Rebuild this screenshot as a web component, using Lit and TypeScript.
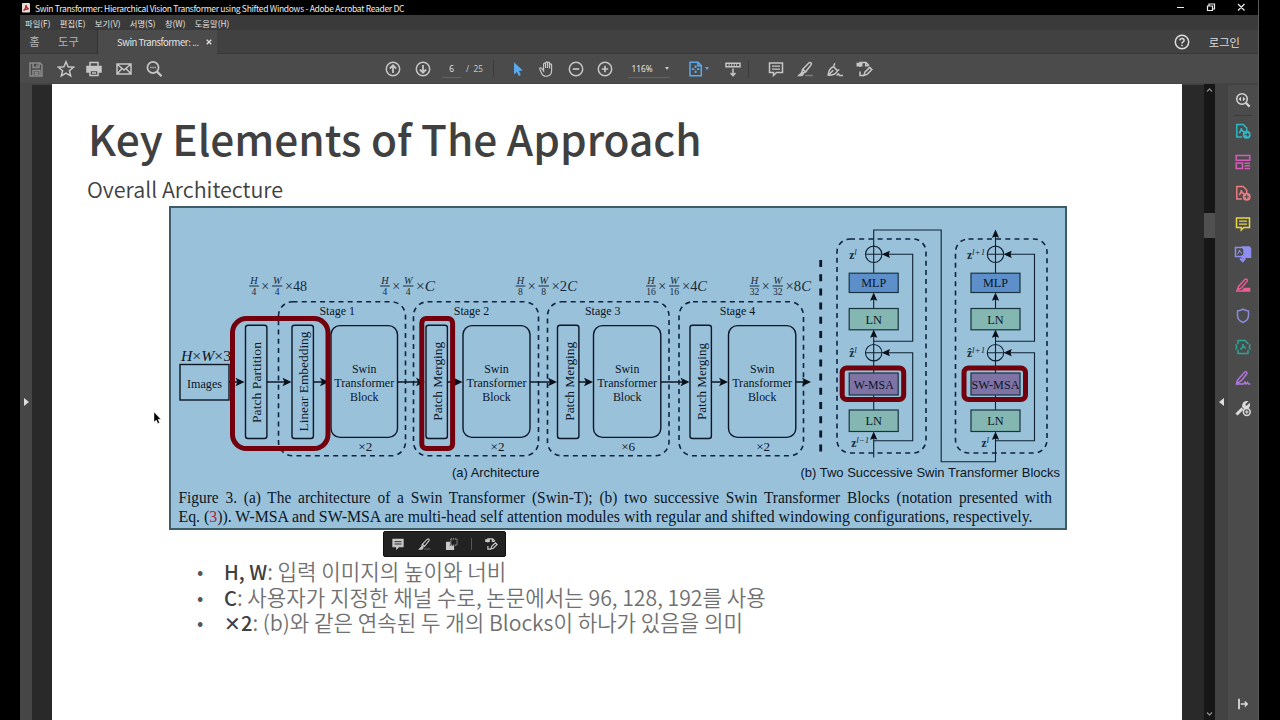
import { LitElement, html, svg, css } from "lit";
import { customElement } from "lit/decorators.js";

/* ---------- icons, all on an 18 x 18 grid centred on 9,9 ---------- */
const ICONS: Record<string, unknown> = {
  save: svg`<path d="M3 3h10l2 2v11H3zM6 3v4.500h6V3M6 16v-5.500h7V16M10 4.500v2M7.500 12.500h4M7.500 14.300h4"/>`,
  star: svg`<path d="M9 1.800l2.100 5 5.400.4-4.100 3.500 1.300 5.300L9 13.100 4.300 16l1.300-5.300L1.500 7.200l5.400-.4z"/>`,
  print: svg`<path d="M5 6V2.500h8V6"/><path d="M2 6.500h14v5.500H2z" fill="currentColor"/><path d="M5 10.500h8v5H5z" fill="#4b4b4b"/><path d="M7 13h4"/>`,
  mail: svg`<path d="M2 4h14v10H2zM2 4l7 6 7-6M2 14l5-5.500M16 14l-5-5.500"/>`,
  zoomout: svg`<circle cx="8" cy="7.500" r="5.600" stroke-width="1.700"/><path d="M12 11.600l4.600 4.600" stroke-width="2.300"/><path d="M5.200 7.500h1.300M7.400 7.500h1.300M9.600 7.500h1.300" stroke-width="1.500"/>`,
  up: svg`<circle cx="9" cy="9" r="6.700"/><path d="M9 13V5.500M5.900 8.500L9 5.300l3.100 3.200" stroke-width="1.800"/>`,
  down: svg`<circle cx="9" cy="9" r="6.700"/><path d="M9 5v7.500M5.900 9.500L9 12.700l3.100-3.200" stroke-width="1.800"/>`,
  pointer: svg`<path d="M5 2.300v12.200l2.900-2.600 1.900 4 2-1-1.900-3.900 3.900-.5z" fill="currentColor" stroke="none"/>`,
  hand: svg`<path d="M5.600 10V4.300c0-1.500 2-1.500 2 0V8V3c0-1.500 2-1.500 2 0V8V3.300c0-1.500 2-1.500 2 0V8.500V5c0-1.400 2-1.400 2 0v5.500c0 7-8.200 7-9.900 3L1.800 9.300c-.5-1.500 1-2 1.900-1l1.900 2.600z" stroke-width="1.200"/>`,
  minus: svg`<circle cx="9" cy="9" r="6.700"/><path d="M5.800 9h6.400" stroke-width="1.700"/>`,
  plus: svg`<circle cx="9" cy="9" r="6.700"/><path d="M5.800 9h6.400M9 5.800v6.400" stroke-width="1.700"/>`,
  fit: svg`<path d="M3 2.200h8l3.300 3.300v10.300H3zM10.800 2.500v3.300h3.300"/><path d="M8.600 5.500v2.500M8.600 10.500V13M4.800 9.200h2.500M10 9.200h2.500" stroke-width="1.800"/>`,
  scroll: svg`<path d="M2 3.200h14v3.600H2z" /><path d="M4.500 5h1.200M7 5h1.200M9.600 5h1.200M12 5h1.200M9 8.500v7M6.500 13L9 15.600l2.500-2.600"/>`,
  comment: svg`<path d="M2.500 3h13v9.500H9.500L6.500 15.500v-3h-4z"/><path d="M5 6.200h8M5 9.200h8" stroke-width="1.300"/>`,
  marker: svg`<path d="M5.500 9.500L12 2.800c1.500-1 3 .4 2.200 1.900L8.500 12l-3.700 1.200zM6 9.500l2.300 2.300"/><path d="M1.800 15.500l3-3 1.500 1.500-1.500 1.500z" fill="currentColor"/><path d="M8 15.500h8" opacity=".4"/>`,
  pen: svg`<path d="M2.200 15.300C2.500 10.500 4 8 7.500 6.700l4 4C10.500 13.500 7.500 15.300 2.200 15.300zM7.500 6.700l1.300-3.500M11.500 10.700l1.800-1.200M2.500 15l4.700-4.700"/><path d="M10.500 15.500l2-1.700 1 1.700H17"/>`,
  edit: svg`<path d="M5 7V2.500h6l3 3M10.700 2.800v3h3M5 11.500v4h4"/><path d="M1.500 3.700h6M1.500 5.500h6" stroke-width="1.800"/><path d="M9 15.300l.9-3.200 4.800-4.700 2.200 2.200-4.800 4.800z"/>`,
  help: svg`<circle cx="9" cy="9" r="6.700"/><path d="M6.900 7.400c.1-2.600 4.200-2.500 4.200 0 0 1.500-2.100 1.500-2.100 3M9 11.800v1.500"/>`,
  search: svg`<circle cx="8" cy="8" r="5.300" stroke-width="1.500"/><path d="M12 12l3.600 3.600" stroke-width="2.200"/><path d="M4.500 8l2.600-2.200v4.400zM11.500 8L8.900 5.800v4.400z" fill="currentColor" stroke="none"/>`,
  exportpdf: svg`<path d="M8 15H2.800V2.500h6.400l3.500 3.500v3M5 11c2.500-2 2.500-3 2.300-5 0 2 1 3.500 3 3.700"/><circle cx="12.700" cy="12.800" r="4" fill="currentColor" stroke="none"/><path d="M10.500 12.800h4M13 11.200l1.700 1.600-1.700 1.600" stroke="#4b4b4b" stroke-width="1.100"/>`,
  organize: svg`<path d="M2.200 2.500h13.600v4.700H2.200zM2.200 10h6.300v5.500H2.200zM10.500 10.200h5.500M10.500 12.800h5.500M10.500 15.400h5.500"/>`,
  createpdf: svg`<path d="M8 15H2.800V2.500h6.400l3.500 3.500v3M5 11c2.500-2 2.500-3 2.300-5 0 2 1 3.500 3 3.700"/><circle cx="12.700" cy="12.800" r="4" fill="currentColor" stroke="none"/><path d="M10.500 12.800h4.400M12.700 10.600V15" stroke="#4b4b4b" stroke-width="1.100"/>`,
  note: svg`<path d="M2.500 3h13v9.500H9.800L7.300 15v-2.500H2.500z"/><path d="M5 6.200h8M5 9.200h8" stroke-width="1.300"/>`,
  combine: svg`<path d="M8.500 2h6.700l1.300 1.500v8.800h-8z" fill="currentColor"/><path d="M1.500 2.500h7l1.500 1.500v7.500H1.500z" fill="#4b4b4b"/><path d="M3.500 9c2-1.500 2-2.500 1.900-4 .2 2 1 2.700 2.600 3.200" stroke-width="1.100"/><path d="M8.700 10v6M6 13.300l2.700 3 2.700-3" stroke-width="1.900"/>`,
  redact: svg`<path d="M4.500 10.500L11 3.300c1.300-.9 2.800.3 2.100 1.800L7.500 12l-4 1.600z"/><path d="M2 15h13.500v-2.500h-5L8 15" fill="currentColor"/>`,
  shield: svg`<path d="M9 2.200c1.700 1.300 3.400 1.600 5.500 1.700v4.600c0 3.400-2.200 5.600-5.500 7-3.300-1.400-5.500-3.600-5.500-7V3.900C5.600 3.800 7.300 3.500 9 2.200z"/>`,
  compress: svg`<path d="M4 6.200V2.500h7l3 3v.7M4 11.800v3.700h10v-3.700M1.500 6.500C3 7 3 11 1.500 11.500M16.500 6.500C15 7 15 11 16.500 11.500M6.300 11.500c2.500-1.500 3-3 2.700-5.500 0 2.500 1 3.800 3 4.200"/>`,
  sign: svg`<path d="M4.500 10L10.700 3c1.300-.9 2.800.3 2.100 1.800L7.300 11.700 2.500 15c.1-2 .7-3.700 2-5z"/><path d="M2.500 15h7l1.500-2 1 2 1.500-1.500 1 1.500h1.800"/>`,
  wrench: svg`<path d="M2.500 15.500l6-6" stroke-width="3"/><path d="M12.800 2.700L10.500 5l.5 2 2 .5 2.200-2.300c.6 2.600-1.600 4.800-4.400 4.200C7.700 8.500 8.500 2.700 12.800 2.700z" fill="currentColor"/><circle cx="12.800" cy="13" r="3.400" fill="#4b4b4b"/><path d="M11 13h3.600M12.800 11.200v3.600" stroke-width="1.200"/>`,
  collapse: svg`<path d="M4.500 3v12" stroke-width="2"/><path d="M6.500 9h7M11 6.200L13.800 9 11 11.800" stroke-width="1.600"/>`,
  notefill: svg`<path d="M2.500 3h13v9.500H9.800L7.300 15v-2.500H2.500z" fill="currentColor"/><path d="M4.500 6h9M4.500 9h9" stroke="#222" stroke-width="1.200"/>`,
  copy: svg`<path d="M2 7h4v5h5v4H2z" fill="currentColor"/><path d="M7.500 2.500h8v8h-8z" stroke-dasharray="1.500 1" stroke-width="1.200"/>`,
};

const icon = (name: string, size = 18) =>
  html`<svg class="ic" width=${size} height=${size} viewBox="0 0 18 18" fill="none" stroke="currentColor" stroke-width="1.500">${ICONS[name]}</svg>`;

/* ---------- the figure ---------- */
const t = (x: number, y: number, s: string, w: number, size = 11.8, anchor = "middle", extra = "") =>
  svg`<text x=${x} y=${y} font-size=${size} text-anchor=${anchor} textLength=${w} lengthAdjust="spacingAndGlyphs" class=${extra}>${s}</text>`;

const arrow = (x1: number, x2: number) => svg`
  <path class="ln" d="M${x1} 382H${x2 - 5}"/>
  <path class="head" d="M${x2} 382l-9-4.300 2 4.300-2 4.300z"/>`;

const upHead = (x: number, y: number) => svg`<path class="head" d="M${x} ${y}l-3.600 8.200 3.600-1.200 3.600 1.200z"/>`;
const leftHead = (x: number, y: number) => svg`<path class="head" d="M${x} ${y}l8.200-3.600-1.200 3.600 1.200 3.600z"/>`;

const vtext = (x: number, y: number, s: string, w: number) =>
  svg`<text transform="translate(${x} ${y}) rotate(-90)" font-size="13.200" text-anchor="middle" textLength=${w} lengthAdjust="spacingAndGlyphs">${s}</text>`;

const slab = (x: number) => svg`<rect class="box" x=${x} y="325.200" width="21.400" height="113.300" rx="2.500"/>`;

const frac = (x: number, den: string, tail: string, end: number) => svg`
  <g class="math">
    <text x=${x} y="284" font-size="10.200" text-anchor="middle" class="it">H</text>
    <path d="M${x - 4.800} 286h9.600"/>
    <text x=${x} y="294.500" font-size="9.600" text-anchor="middle">${den}</text>
    <text x=${x + 11.300} y="290.500" font-size="14" text-anchor="middle">×</text>
    <text x=${x + 23.200} y="284" font-size="10.200" text-anchor="middle" class="it">W</text>
    <path d="M${x + 18} 286h10.400"/>
    <text x=${x + 23.200} y="294.500" font-size="9.600" text-anchor="middle">${den}</text>
    <text x=${x + 31} y="290.500" font-size="14.800" textLength=${end - x - 31} lengthAdjust="spacingAndGlyphs">×${tail.replace("C", "")}${tail.includes("C") ? svg`<tspan class="it">C</tspan>` : ""}</text>
  </g>`;

const stage = (n: number, x0: number, x1: number, tx: number, bx: number, bw: number, rep: string) => svg`
  <rect class="dash" x=${x0} y="301.800" width=${x1 - x0} height="154" rx="14"/>
  ${t(tx, 315.300, "Stage " + n, 35.500)}
  <rect class="box" x=${bx} y="325.600" width=${bw} height="111.800" rx="9"/>
  ${t(bx + bw / 2, 372.500, "Swin", 24.500)}
  ${t(bx + bw / 2, 387, "Transformer", 60)}
  ${t(bx + bw / 2, 401, "Block", 28.500)}
  ${t(bx + bw / 2 + 1, 450.500, "×" + rep, 14)}`;

const column = (x: number, boxX: number, boxW: number, msa: string, sup: string, supIn: string) => svg`
  <rect class="dash" x=${boxX} y="239" width=${boxW} height="214" rx="13" />
  <path class="thin" d="M${x} 411V360.500M${x} 344.500V334M${x} 309V298M${x} 273V262M${x} 440.700h39V352.700H${x + 14}M${x} 341.200h39V254.300H${x + 14}"/>
  <g class="thin"><circle cx=${x} cy="254.300" r="8.200"/><path d="M${x - 8} 254.300h16M${x} 246v16.500"/>
  <circle cx=${x} cy="352.700" r="8.200"/><path d="M${x - 8} 352.700h16M${x} 344.500v16.500"/></g>
  ${leftHead(x + 8, 254.300)}${leftHead(x + 8, 352.700)}
  ${upHead(x, 292.500)}${upHead(x, 329.500)}${upHead(x, 431.500)}
  <rect class="blk" x=${x - 24.500} y="273.200" width="49" height="19.300" fill="#5d8fcb"/>
  <rect class="blk" x=${x - 24.500} y="308.500" width="49" height="21.300" fill="#84b7b1"/>
  <rect class="blk" x=${x - 24.500} y="373" width="49" height="22" fill="#7f73a5"/>
  <rect class="blk" x=${x - 24.500} y="410" width="49" height="21.500" fill="#84b7b1"/>
  ${t(x, 286.700, "MLP", 25)}${t(x, 323.700, "LN", 16.500, 12.500)}
  ${t(x, 388.500, msa, msa.length > 5 ? 48 : 40, 12.500)}${t(x, 425, "LN", 16.500, 12.500)}
  <rect class="red" x=${x - 31.500} y="368" width="61.500" height="31.500" rx="4.500"/>
  <text class="z" x=${x - (sup.length > 1 ? 28.500 : 24.500)} y="259">z<tspan dy="-4" class="sup">${sup}</tspan></text>
  <text class="z" x=${x - (sup.length > 1 ? 28.500 : 24.500)} y="357">ẑ<tspan dy="-4" class="sup">${sup}</tspan></text>
  <text class="z" x=${x - (supIn.length > 1 ? 22.500 : 14)} y="446.500">z<tspan dy="-4" class="sup">${supIn}</tspan></text>`;

@customElement("swin-figure")
export class SwinFigure extends LitElement {
  static styles = css`
    :host { display: block; width: 898px; height: 324px; }
    svg { display: block; }
    text { font-family: "Liberation Serif", "Times New Roman", serif; fill: #0b1626; white-space: pre; }
    .box { fill: none; stroke: #0b1626; stroke-width: 1.4; }
    .blk { stroke: #17333f; stroke-width: 1.2; }
    .dash { fill: none; stroke: #0e2440; stroke-width: 1.6; stroke-dasharray: 5 4.2; }
    .ln { stroke: #0b1626; stroke-width: 1.5; fill: none; }
    .thin { stroke: #0f2233; stroke-width: 1.1; fill: none; }
    .head { fill: #0b0f18; }
    .red { fill: none; stroke: #73000d; stroke-width: 5; }
    .it { font-style: italic; }
    .math text { fill: #142a40; }
    .math path { stroke: #142a40; stroke-width: 1; }
    .sans { font-family: "Liberation Sans", Arial, sans-serif; }
    .z { font-weight: bold; font-size: 11.5px; fill: #142a40; }
    .sup { font-weight: normal; font-style: italic; font-size: 9px; }
    .cap { font-size: 15.700px; }
    .wide { word-spacing: 3px; }
    .ref { fill: #b3203a; }
  `;
  render() {
    return html`<svg width="898" height="324" viewBox="169 206 898 324">
      <rect x="170" y="207" width="896" height="322" fill="#9ac1da" stroke="#3d5b68" stroke-width="2"/>
      ${frac(254, "4", "48", 307)}${frac(385, "4", "C", 435)}${frac(520.500, "8", "2C", 577)}
      ${frac(651, "16", "4C", 707)}${frac(754.500, "32", "8C", 811)}
      ${stage(1, 278.500, 405.500, 337.200, 331, 66.500, "2")}
      ${stage(2, 413.500, 538.500, 471.500, 463, 67, "2")}
      ${stage(3, 547.500, 669, 602.700, 593.500, 67.300, "6")}
      ${stage(4, 679, 803.500, 737.500, 728.500, 67.300, "2")}
      <text x="181" y="361" font-size="14" textLength="50" lengthAdjust="spacingAndGlyphs"><tspan class="it">H</tspan>×<tspan class="it">W</tspan>×3</text>
      <rect class="box" x="180" y="364.500" width="49" height="35.500"/>
      ${t(204.500, 387.500, "Images", 35)}
      ${slab(245.500)}${slab(292)}${slab(426)}${slab(557.500)}${slab(690)}
      ${vtext(261, 382.500, "Patch Partition", 81)}${vtext(307.800, 381.500, "Linear Embedding", 100)}
      ${vtext(442.300, 381.300, "Patch Merging", 79)}${vtext(573.700, 381.300, "Patch Merging", 79)}${vtext(706, 381.500, "Patch Merging", 77)}
      ${arrow(229, 244.500)}${arrow(267, 291.500)}${arrow(313.500, 329)}${arrow(397.500, 425)}
      ${arrow(447.500, 462.500)}${arrow(530, 557)}${arrow(579, 593)}${arrow(661, 689.500)}${arrow(711.500, 728)}${arrow(796, 811)}
      <rect class="red" x="232.500" y="318.600" width="95.500" height="130" rx="14"/>
      <rect class="red" x="421.800" y="318.500" width="30.800" height="130" rx="4.500"/>
      <path d="M820.700 260V456" stroke="#0b1626" stroke-width="2.800" stroke-dasharray="7 7.200"/>
      ${column(873.700, 837, 89, "W-MSA", "l", "l−1")}
      ${column(995.500, 955.500, 91.500, "SW-MSA", "l+1", "l")}
      <path class="thin" d="M873.700 457.500V438M873.700 246V230H941.200V461.700H995.500V438M995.500 246V236"/>
      ${upHead(995.500, 229.500)}
      ${t(452, 477, "(a) Architecture", 87.500, 12.400, "start", "sans")}
      ${t(800.500, 477, "(b) Two Successive Swin Transformer Blocks", 259.500, 12.400, "start", "sans")}
      <text class="cap wide" x="178.500" y="502.700" textLength="873.500" lengthAdjust="spacingAndGlyphs">Figure 3. (a) The architecture of a Swin Transformer (Swin-T); (b) two successive Swin Transformer Blocks (notation presented with</text>
      <text class="cap" x="178.500" y="521.800" textLength="854" lengthAdjust="spacingAndGlyphs">Eq. (<tspan class="ref">3</tspan>)). W-MSA and SW-MSA are multi-head self attention modules with regular and shifted windowing configurations, respectively.</text>
    </svg>`;
  }
}

const MENUS = ["파일(F)", "편집(E)", "보기(V)", "서명(S)", "창(W)", "도움말(H)"];
const TOOLS: [string, string][] = [
  ["exportpdf", "teal"], ["organize", "magenta"], ["createpdf", "coral"], ["note", "yellow"], ["combine", "violet"],
  ["redact", "pink"], ["shield", "indigo"], ["compress", "green"], ["sign", "purple"], ["wrench", "light"],
];

@customElement("app-root")
export class AppRoot extends LitElement {
  static styles = css`
    :host { display: block; width: 1280px; height: 720px; overflow: hidden; background: #000;
      font-family: "Noto Sans", "Noto Sans CJK KR", sans-serif; color: #d6d6d6; }
    * { box-sizing: border-box; }
    .window { width: 1239px; height: 720px; margin-left: 20px; display: flex; flex-direction: column; position: relative; border-right: 1px solid #5a5a5a; }
    .ic { display: block; flex: none; }
    .title { height: 15px; flex: none; display: flex; align-items: center; padding-left: 2px; gap: 5px; font: 8.500px/14px "Noto Sans CJK KR", sans-serif; color: #eee; white-space: nowrap; }
    .title .name { flex: 1; letter-spacing: -.3px; }
    .wc { margin-right: 12px; flex: none; }
    .menu { height: 15px; flex: none; background: #3a3a3a; display: flex; align-items: center; gap: 9.300px; padding-left: 5px; font: 8.300px/14px "Noto Sans CJK KR", sans-serif; color: #e0e0e0; white-space: nowrap; }
    .tabs { height: 24px; flex: none; background: #414141; display: flex; align-items: stretch; border-bottom: 1px solid #383838; font: 11.300px/22px "Noto Sans CJK KR", sans-serif; white-space: nowrap; }
    .home { width: 29px; text-align: center; color: #b5b5b5; }
    .tool { width: 48px; padding-left: 9px; color: #b5b5b5; }
    .tab { width: 120px; height: 24px; background: #4b4b4b; border-left: 1px solid #333; padding: 0 5px 0 19px; display: flex; align-items: center; justify-content: space-between; font: 9.500px/22px "Noto Sans CJK KR", sans-serif; letter-spacing: -.45px; color: #e4e4e4; }
    .grow { flex: 1; }
    .login { display: flex; align-items: center; gap: 18px; padding-right: 18px; color: #ddd; font-size: 11.300px; }
    .bar { height: 30px; flex: none; background: #4b4b4b; border-bottom: 1px solid #444; display: grid; align-items: center; justify-items: center; color: #c6c6c6; font-size: 8.300px;
      grid-template-columns: 32px 27px 30px 30px 29px 210px 29px 31px 27px 19px 19px 29px 29px 30px 28px 45px 13px 41px 30px 13px 30px 29px 29px 29px; }
    .bar > .gap { width: 1px; height: 18px; background: #3b3b3b; }
    .bar > .gap.left { justify-self: start; }
    .dim { color: #8b8b8b; }
    .blue { color: #5aa9ee; }
    .num { border-bottom: 1px solid #626262; width: 19px; height: 18px; line-height: 17px; text-align: center; color: #e2e2e2; }
    .pct { border-bottom: 1px solid #626262; width: 42px; height: 18px; line-height: 17px; padding-left: 4px; color: #e2e2e2; white-space: nowrap; margin-left: 14px; }
    .caret { width: 0; height: 0; border: 2.500px solid transparent; border-top: 3px solid currentColor; border-bottom: 0; }
    .bar > .caret { margin-left: -8px; }
    .fit { display: flex; align-items: center; margin-left: 1px; }
    .body { flex: 1; min-height: 0; display: flex; }
    .lrail { width: 12px; background: #464646; display: flex; align-items: center; justify-content: center; }
    .tri { width: 0; height: 0; border: 4px solid transparent; }
    .tri.r { border-left: 5px solid #ddd; border-right: 0; }
    .tri.l { border-right: 5px solid #ddd; border-left: 0; }
    .well { width: 20px; background: #292929; border-top: 1px solid #3f3f3f; }
    .well.right { width: 22px; }
    .page { width: 1130px; background: #fff; padding-left: 35px; overflow: hidden; }
    h1 { margin: 0; padding: 21px 0 0 1px; height: 89px; font: 500 42.400px/66px "Noto Sans CJK KR", sans-serif; color: #404040; white-space: nowrap; }
    h2 { margin: 0; height: 33px; font: 350 21.500px/32px "Noto Sans CJK KR", sans-serif; color: #404040; white-space: nowrap; }
    swin-figure { margin-left: 82px; }
    ul { margin: 28px 0 0 110px; padding: 0; list-style: none; font: 350 21.200px/25.500px "Noto Sans CJK KR", sans-serif; color: #707070; white-space: nowrap; }
    li { display: flex; height: 25.500px; }
    li::before { content: "•"; width: 27px; color: #555; font-size: 19px; }
    b { font-weight: 500; font-size: 20px; color: #404040; }
    .sb { width: 11px; background: #161616; color: #8a8a8a; display: flex; flex-direction: column; align-items: center; padding: 3px 0; }
    .thumb { width: 11px; height: 25px; background: #505050; margin-top: 120px; }
    .rrail { width: 13px; background: #434343; display: flex; align-items: center; justify-content: center; }
    .tools { flex: 1; background: #4b4b4b; border-top: 1px solid #414141; display: flex; flex-direction: column; align-items: center; }
    .tools .cell { height: 30.800px; flex: none; display: flex; align-items: center; }
    .tools .first { border-bottom: 1px solid #3d3d3d; }
    .tools .last { margin-top: auto; padding-bottom: 8px; color: #ddd; }
    .teal { color: #2fb8c6; } .magenta { color: #d65cba; } .coral { color: #ee7b80; } .yellow { color: #e8d544; }
    .violet { color: #8f8ef0; } .pink { color: #ea5f94; } .indigo { color: #8c8bd8; } .green { color: #2ba595; }
    .purple { color: #b077e0; } .light { color: #dcdcdc; }
    .float { position: absolute; left: 363px; top: 531px; width: 123px; height: 26px; background: #222; border: 1px solid #111; border-radius: 2px; display: flex; align-items: center; color: #c8c8c8; padding: 0 7px; gap: 13px; }
    .float i { width: 1px; flex: none; height: 12px; background: #555; margin: 0 -1px; }
    .cursor { position: absolute; left: 133px; top: 411px; }
  `;
  render() {
    return html`<div class="window">
      <div class="title">
        <svg width="8" height="10" viewBox="0 0 8 10"><rect width="8" height="9.500" rx="1" fill="#e9dada"/><path d="M1.500 7.500C4 5.500 4.200 4 4 2c.2 2.500 1 3.500 2.700 4.200C5 6 3.500 6.300 1.500 7.500z" fill="none" stroke="#b8242c" stroke-width="1.300"/></svg>
        <span class="name">Swin Transformer: Hierarchical Vision Transformer using Shifted Windows - Adobe Acrobat Reader DC</span>
        <svg class="wc" width="82" height="11" viewBox="0 0 82 11" fill="none" stroke="#eee" stroke-width="1.200"><path d="M13 5.500h7M43.500 4h5v4.500h-5zM45 4V2h5.500v5h-2M74 2l6.500 6.500M80.500 2L74 8.500"/></svg>
      </div>
      <div class="menu">${MENUS.map((m) => html`<span>${m}</span>`)}</div>
      <div class="tabs">
        <span class="home">홈</span><span class="tool">도구</span>
        <span class="tab"><span>Swin Transformer: ...</span><svg class="ic" width="6" height="6" viewBox="0 0 6 6" stroke="#ddd" stroke-width="1.300"><path d="M.7.7l4.600 4.600M5.300.7L.7 5.300"/></svg></span>
        <span class="grow"></span>
        <span class="login">${icon("help")}<span>로그인</span></span>
      </div>
      <div class="bar">
        <span class="dim">${icon("save")}</span>${icon("star")}${icon("print")}${icon("mail")}${icon("zoomout")}<span></span>
        ${icon("up")}${icon("down")}<span class="num">6</span><span>/&nbsp; 25</span><span class="gap"></span>
        <span class="blue">${icon("pointer")}</span>${icon("hand")}${icon("minus")}${icon("plus")}<span class="pct">116%</span><span class="caret"></span>
        <span class="blue fit">${icon("fit")}<span class="caret"></span></span>${icon("scroll")}<span class="gap left"></span>
        ${icon("comment")}${icon("marker")}${icon("pen")}${icon("edit")}
      </div>
      <div class="body">
        <div class="lrail"><span class="tri r"></span></div>
        <div class="well"></div>
        <main class="page">
          <h1>Key Elements of The Approach</h1>
          <h2>Overall Architecture</h2>
          <swin-figure></swin-figure>
          <ul>
            <li><span><b>H, W</b>: 입력 이미지의 높이와 너비</span></li>
            <li><span><b>C</b>: 사용자가 지정한 채널 수로, 논문에서는 96, 128, 192를 사용</span></li>
            <li><span><b>✕2</b>: (b)와 같은 연속된 두 개의 Blocks이 하나가 있음을 의미</span></li>
          </ul>
        </main>
        <div class="well right"></div>
        <div class="sb">
          <svg class="ic" width="7" height="6" viewBox="0 0 7 6" fill="none" stroke="currentColor" stroke-width="1.300"><path d="M1 4.500L3.500 2 6 4.500"/></svg>
          <span class="thumb"></span><span class="grow"></span>
          <svg class="ic" width="7" height="6" viewBox="0 0 7 6" fill="none" stroke="currentColor" stroke-width="1.300"><path d="M1 1.500L3.500 4 6 1.500"/></svg>
        </div>
        <div class="rrail"><span class="tri l"></span></div>
        <div class="tools">
          <span class="cell first">${icon("search")}</span>
          ${TOOLS.map(([n, c]) => html`<span class="cell ${c}">${icon(n)}</span>`)}
          <span class="last">${icon("collapse", 16)}</span>
        </div>
      </div>
      <div class="float">${icon("notefill", 14)}${icon("marker", 14)}${icon("copy", 14)}<i></i>${icon("edit", 14)}</div>
      <svg class="cursor" width="9" height="14" viewBox="0 0 9 14"><path d="M1 1v10l2.300-2 1.500 3.500 1.700-.8L5 8.300h2.800z" fill="#000" stroke="#fff" stroke-width=".4"/></svg>
    </div>`;
  }
}
